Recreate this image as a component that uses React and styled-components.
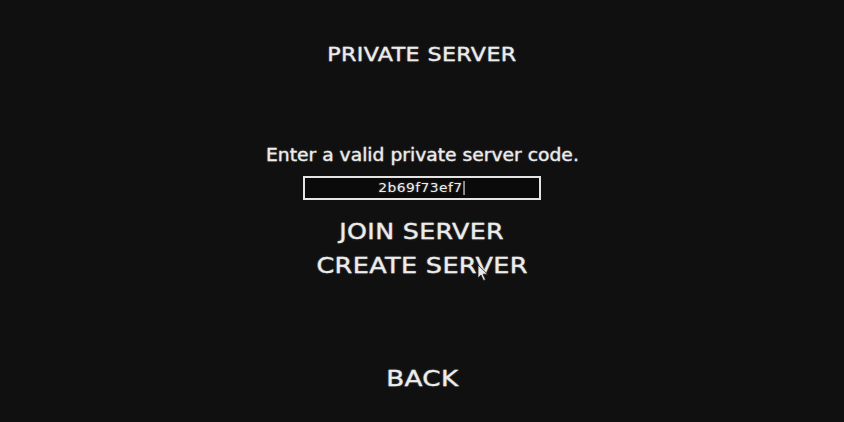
import React from "react";
import styled, { createGlobalStyle } from "styled-components";

const Global = createGlobalStyle`
  html, body { margin: 0; padding: 0; background: #101010; }
  * { box-sizing: border-box; }
`;

const Screen = styled.div`
  position: relative;
  width: 844px;
  height: 422px;
  background: #101010;
  display: flex;
  flex-direction: column;
  align-items: center;
  font-family: "DejaVu Sans", "Verdana", sans-serif;
  color: #ededed;
  text-shadow: 0 0 2px rgba(255, 255, 255, 0.35);
  -webkit-text-stroke: 0.3px #ededed;
  overflow: hidden;
`;

/* the menu face is a wide, extended display type: stretch the glyphs horizontally */
const Wide = styled.span`
  display: inline-block;
  transform: scaleX(${(p) => p.$sx});
  transform-origin: center;
  white-space: nowrap;
`;

const Title = styled.h1`
  margin: 43px 0 0;
  font-size: 19px;
  font-weight: normal;
  line-height: 22px;
  letter-spacing: 0.3px;
`;

const Prompt = styled.p`
  margin: 79px 0 0;
  font-size: 18px;
  line-height: 22px;
`;

const CodeField = styled.div`
  margin-top: 10px;
  width: 238px;
  height: 24px;
  border: 2px solid #e4e4e4;
  background: #0a0a0a;
  display: flex;
  align-items: center;
  justify-content: center;
  font-size: 12px;
  -webkit-text-stroke: 0;
  letter-spacing: 0.4px;
`;

const Caret = styled.span`
  display: inline-block;
  width: 1px;
  height: 14px;
  background: #e8e8e8;
  margin-left: 1px;
  vertical-align: middle;
`;

const MenuButton = styled.button`
  margin-top: ${(p) => p.$top}px;
  background: none;
  border: none;
  padding: 0;
  font-family: inherit;
  color: inherit;
  text-shadow: inherit;
  -webkit-text-stroke: inherit;
  font-size: 22px;
  line-height: 26px;
  letter-spacing: 0.3px;
  cursor: pointer;
`;

const Pointer = styled.svg`
  position: absolute;
  left: 477px;
  top: 264px;
`;

export default function App() {
  return (
    <>
      <Global />
      <Screen>
        <Title>
          <Wide $sx={1.17}>PRIVATE SERVER</Wide>
        </Title>
        <Prompt>
          <Wide $sx={1.04}>Enter a valid private server code.</Wide>
        </Prompt>
        <CodeField>
          <Wide $sx={1.15}>
            2b69f73ef7
            <Caret />
          </Wide>
        </CodeField>
        <MenuButton $top={19}>
          <Wide $sx={1.15}>JOIN SERVER</Wide>
        </MenuButton>
        <MenuButton $top={8}>
          <Wide $sx={1.16}>CREATE SERVER</Wide>
        </MenuButton>
        <MenuButton $top={87}>
          <Wide $sx={1.19}>BACK</Wide>
        </MenuButton>
        <Pointer width="12" height="18" viewBox="0 0 12 18">
          <path d="M1 1 L1 14 L4 11 L6.5 16.5 L8.5 15.6 L6 10.2 L10.5 10.2 Z" fill="#e8e8e8" stroke="#222" strokeWidth="0.8" />
        </Pointer>
      </Screen>
    </>
  );
}
